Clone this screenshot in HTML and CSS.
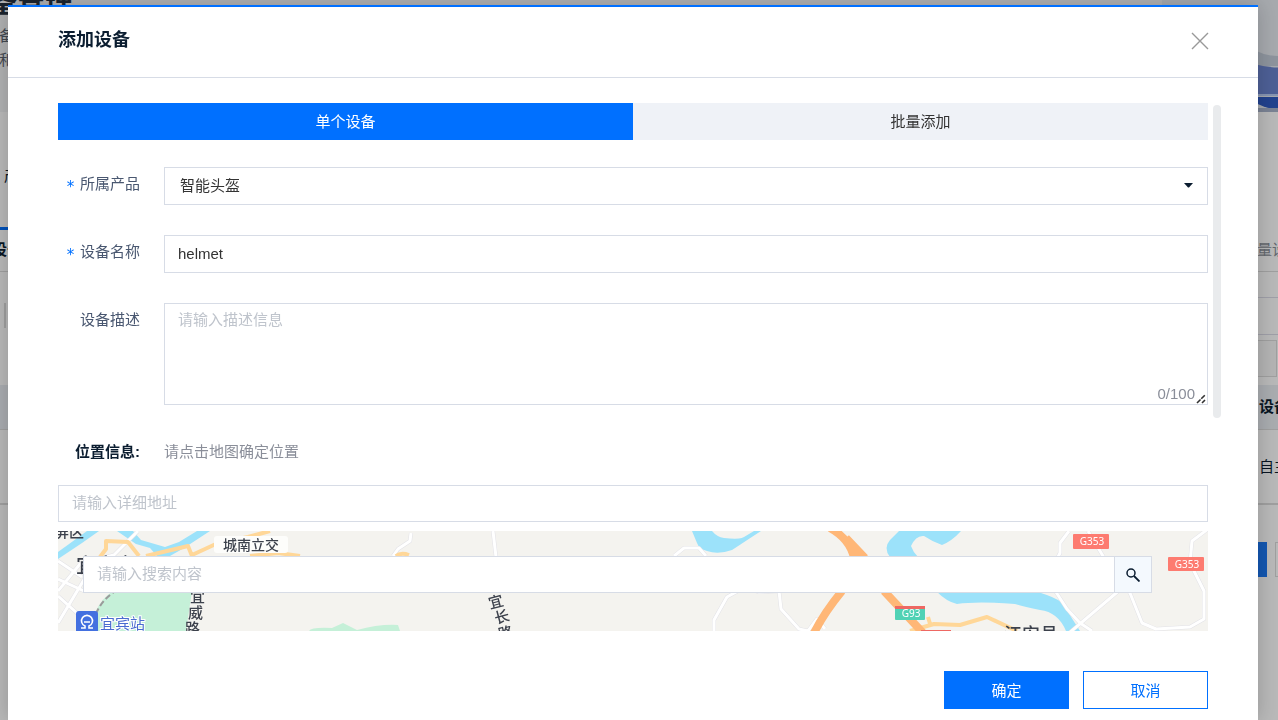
FILE: index.html
```
<!DOCTYPE html>
<html lang="zh-CN">
<head>
    <meta charset="UTF-8">
    <meta name="viewport" content="width=device-width, initial-scale=1.0">
    <title>添加设备</title>
    <link rel="stylesheet" href="styles.css">
</head>
<body>
    <!-- device list page, under the dialog -->
    <div class="page">
        <div class="banner">
            <div class="banner-text">
                <h1>设备管理</h1>
                <p>设备</p>
                <p>　和</p>
            </div>
            <svg class="banner-art" width="140" height="112" viewBox="0 0 140 112">
                <rect width="140" height="112" fill="#e6eaf0"/>
                <path d="M92 50q24 12 48 0v16H92z" fill="#c3ccd9"/>
                <path d="M92 64q24 6 48 2v30H92z" fill="#6b84cf"/>
                <path d="M92 97h48v5q-24 14-48 0z" fill="#2f5bc4"/>
                <path d="M92 95h48" stroke="#b9cdf5" stroke-width="2" fill="none"/>
                <path d="M92 108h48v4H92z" fill="#a9b4cc"/>
            </svg>
        </div>
        <div class="page-tabs"><span>产品</span></div>
        <div class="list-title"><b>设备</b><span>批量设备</span></div>
        <div class="list-tools"><i class="divider"></i><i class="search"></i></div>
        <div class="list-filter"><i></i></div>
        <div class="list-head"><span>设备</span></div>
        <div class="list-row"><span>自主</span></div>
        <div class="pager"><i class="current"></i><i></i></div>
    </div>

    <div class="mask">
        <div class="dialog" role="dialog" aria-labelledby="dialogTitle">
            <div class="dialog-header">
                <h2 id="dialogTitle">添加设备</h2>
                <button class="close" type="button" aria-label="关闭">
                    <svg width="18" height="18" viewBox="0 0 18 18"><path d="M1 1l16 16M17 1L1 17" stroke="#999" stroke-width="1.4"/></svg>
                </button>
            </div>

            <form class="dialog-body">
                <div class="tabs">
                    <button class="tab active" type="button">单个设备</button>
                    <button class="tab" type="button">批量添加</button>
                </div>

                <div class="field">
                    <label for="product"><span class="required">*</span>所属产品</label>
                    <div class="select-box">
                        <select id="product"><option>智能头盔</option></select>
                        <svg class="arrow" width="9" height="5" viewBox="0 0 9 5"><path d="M0 0h9L5 4.500H4z" fill="#0b1d30"/></svg>
                    </div>
                </div>

                <div class="field">
                    <label for="deviceName"><span class="required">*</span>设备名称</label>
                    <input class="control" id="deviceName" type="text" value="helmet">
                </div>

                <div class="field">
                    <label for="deviceDesc">设备描述</label>
                    <div class="textarea-box">
                        <textarea id="deviceDesc" maxlength="100" placeholder="请输入描述信息"></textarea>
                        <span class="count">0/100</span>
                        <svg class="grip" width="10" height="10" viewBox="0 0 10 10"><path d="M1 9l8-8M6 9l3-3" stroke="#333" stroke-width="1.600" stroke-dasharray="5 1"/></svg>
                    </div>
                </div>

                <div class="field location">
                    <label for="address">位置信息:</label>
                    <span class="hint">请点击地图确定位置</span>
                </div>
                <input class="control address" id="address" type="text" placeholder="请输入详细地址">

                <div class="map">
                    <svg class="map-art" viewBox="0 0 1150 100" preserveAspectRatio="xMinYMin slice">
                        <rect width="1150" height="100" fill="#f4f3ef"/>
                        <!-- rivers -->
                        <g fill="#9ce2fa">
                            <path d="M0 21L29 0h12L24 12 0 28z"/>
                            <path d="M59 0h16l8 9 24 7 14-5 18-11h13l-26 17-14 8H99l-7-8-14-4z"/>
                            <path d="M634 0h20q5 6 12 7 16 2 20-1l10-6h7l-29 19q-14 5-25 1-8-2-10-8z"/>
                            <path d="M841 0h62q-9 10-19 14-9-3-18-9-8-1-13 10 2 6 7 11h-28q-7-9 0-17z"/>
                            <path d="M878 60q60 1 98 0 30 8 32 18l14 22h-14q-8-19-26-21-15-3-25-6-38-3-58 0-10-2-21-13z"/>
                        </g>
                        <!-- parks -->
                        <path d="M38 80q5-12 17-20h79l-6 40H35z" fill="#c5f0d8"/>
                        <path d="M251 100q2-4 23-3l11-5 14 7q22-6 41-5l2 6z" fill="#c5f0d8"/>
                        <path d="M38 83q5-13 18-22" stroke="#9a9a9a" stroke-width="2" stroke-dasharray="6 3" fill="none"/>
                        <!-- local roads -->
                        <g fill="none" stroke-linejoin="round">
                            <g stroke="#e2e2e7" stroke-width="4">
                                <path d="M0 60l22-27 34-9 24-24M0 30l24 16M0 92l30-50M0 65l20 18M0 48l26 12"/>
                                <path d="M353 2l-1 8-12 8-5 7M435 0l3 26M616 25l10-8h15l7 8M656 100V89l13-23 18-10 14 5 20-1 2 18 18 20 9 2 9-12 8 10"/>
                                <path d="M1011 0l-9 12v10l-6 12v24l13 20 13 14 12 8M1030 0l18 30 24 32 12 30 14 6 34-2 14-8V60l-14-28 2-22 16-12M1010 103l80-68"/>
                            </g>
                            <g stroke="#fff" stroke-width="3">
                                <path d="M0 60l22-27 34-9 24-24M0 30l24 16M0 92l30-50M0 65l20 18M0 48l26 12"/>
                                <path d="M353 2l-1 8-12 8-5 7M435 0l3 26M616 25l10-8h15l7 8M656 100V89l13-23 18-10 14 5 20-1 2 18 18 20 9 2 9-12 8 10"/>
                                <path d="M1011 0l-9 12v10l-6 12v24l13 20 13 14 12 8M1030 0l18 30 24 32 12 30 14 6 34-2 14-8V60l-14-28 2-22 16-12M1010 103l80-68"/>
                            </g>
                            <!-- main roads -->
                            <g stroke="#ffd798" stroke-width="4">
                                <path d="M42 26l6-8 0-8 22 1 11 14M88 25l42-10 4 10M134 24l26-12 30-6 22-6M192 25l28-3 22 3M338 25q5-4 13-1"/>
                                <path d="M852 100l24-7 26 1 27-8 30 14M870 86l3 10"/>
                            </g>
                            <path d="M772-3q20 11 24 30M784 60q-18 22-28 42M788 7l19 20M826 60l14 15 26 28" stroke="#ffb777" stroke-width="8"/>
                        </g>
                        <!-- place names -->
                        <g class="place">
                            <text x="-4" y="6">屏区</text>
                            <text x="18" y="42" font-size="20">宜宾市区</text>
                            <rect x="156" y="5" width="74" height="17" rx="3" fill="#fdfdfb"/>
                            <text x="165" y="19" font-size="14">城南立交</text>
                            <text x="132" y="71">宜</text>
                            <text x="130" y="87">威</text>
                            <text x="127" y="103">路</text>
                            <text x="432" y="78" transform="rotate(-15 432 78)">宜</text>
                            <text x="438" y="93" transform="rotate(-15 438 93)">长</text>
                            <text x="442" y="109" transform="rotate(-15 442 109)">路</text>
                            <text x="946" y="110" font-size="18">江安县</text>
                        </g>
                        <rect x="18" y="80" width="22" height="22" rx="3" fill="#4370e0"/>
                        <path d="M23 97h4v-2a5.500 5.500 0 1 1 4 0v2h4M26 91h6" fill="none" stroke="#fff" stroke-width="1.600"/>
                        <text class="station" x="42" y="98">宜宾站</text>
                        <!-- road numbers -->
                        <g class="road-no">
                            <rect x="1015" y="3" width="36" height="15" rx="1" fill="#fd7b70"/>
                            <text x="1034" y="14">G353</text>
                            <rect x="1110" y="26" width="36" height="14" rx="1" fill="#fd7b70"/>
                            <text x="1129" y="37">G353</text>
                            <rect x="837" y="75" width="30" height="14" rx="1" fill="#50d2b5"/>
                            <path d="M837 75h30v3h-30z" fill="#ee6863"/>
                            <text x="853" y="86">G93</text>
                            <path d="M863 99h30v2h-30z" fill="#ee6863"/>
                        </g>
                    </svg>
                    <div class="map-search">
                        <input class="control" type="text" aria-label="搜索" placeholder="请输入搜索内容">
                        <button type="button" aria-label="搜索">
                            <svg width="14" height="14" viewBox="0 0 14 14"><circle cx="5" cy="5" r="4" fill="none" stroke="#0b1d30" stroke-width="1.500"/><path d="M8 8l5.500 5.500" stroke="#0b1d30" stroke-width="1.800"/></svg>
                        </button>
                    </div>
                </div>
                <div class="scrollbar"></div>
            </form>

            <div class="dialog-footer">
                <button class="btn primary" type="button">确定</button>
                <button class="btn" type="button">取消</button>
            </div>
        </div>
    </div>
</body>
</html>
```
FILE: styles.css
```
* {
    box-sizing: border-box;
}
body {
    margin: 0;
    overflow: hidden;
    font-family: "Liberation Sans", "Noto Sans CJK SC", sans-serif;
    font-size: 15px;
    color: #0b1d30;
}
button, input, select, textarea {
    font: inherit;
    margin: 0;
    border-radius: 0;
}
h1, h2, p {
    margin: 0;
}

/* page behind */
.page {
    margin: 0 -24px;
}
.banner {
    display: flex;
    justify-content: space-between;
    height: 112px;
    background: #f4f5f6;
}
.banner-text {
    color: #5c6470;
}
.banner h1 {
    height: 24px;
    margin-left: -15px;
    font-size: 28px;
    line-height: 8px;
    color: #26323f;
}
.banner p {
    padding-left: 8px;
    line-height: 24px;
}
.page-tabs {
    height: 118px;
    padding-top: 52px;
}
.page-tabs span {
    display: block;
    width: 80px;
    height: 66px;
    padding-left: 28px;
    line-height: 24px;
    border-bottom: 3px solid #0070ff;
}
.list-title {
    display: flex;
    justify-content: space-between;
    height: 42px;
    padding: 0 0 0 16px;
    line-height: 40px;
    border-bottom: 1px solid #dcdcdc;
}
.list-title span {
    color: #8b9099;
}
.list-tools {
    display: flex;
    justify-content: space-between;
    height: 63px;
    padding: 25px 0 0 28px;
}
.list-tools i {
    width: 2px;
    height: 25px;
    margin-top: 6px;
    background: #dcdcdc;
}
.list-tools .search {
    width: 200px;
    height: 38px;
    margin: 0;
    border: 1px solid #dcdce8;
    background: none;
}
.list-filter {
    display: flex;
    justify-content: flex-end;
    height: 50px;
    padding: 5px 25px 8px 0;
}
.list-filter i {
    width: 80px;
    border: 1px solid #dcdcdc;
    background: #f8f8f8;
}
.list-head, .list-row {
    display: flex;
    justify-content: flex-end;
    padding-right: 13px;
    line-height: 44px;
    border-bottom: 1px solid #dcdcdc;
}
.list-head {
    font-weight: bold;
    background: #eaeef3;
}
.list-row {
    line-height: 73px;
    border-bottom-width: 2px;
}
.pager {
    display: flex;
    justify-content: flex-end;
    gap: 8px;
    padding-top: 37px;
}
.pager i {
    width: 27px;
    height: 35px;
    border: 1px solid #dcdcdc;
}
.pager .current {
    width: 35px;
    border: 0;
    background: #1a78f5;
}

/* dialog */
.mask {
    position: fixed;
    inset: 0;
    padding: 5px 20px 0 8px;
    background: rgba(0, 0, 0, 0.28);
}
.dialog {
    display: flex;
    flex-direction: column;
    min-height: 100%;
    border-top: 2px solid #0070ff;
    background: #fff;
    box-shadow: 0 0 20px rgba(0, 0, 0, 0.2);
}
.dialog-header {
    display: flex;
    align-items: center;
    justify-content: space-between;
    padding: 21px 49px 24px 50px;
    border-bottom: 1px solid #d7dce6;
}
.dialog-header h2 {
    font-size: 18px;
    line-height: 25px;
}
.close {
    display: flex;
    padding: 0;
    border: 0;
    background: none;
}
.dialog-body {
    position: relative;
    margin: 25px 50px 0;
}
.tabs {
    display: flex;
    margin-bottom: 27px;
}
.tab {
    flex: 1;
    height: 37px;
    padding: 0 0 2px;
    border: 0;
    background: #eff2f7;
    color: #333;
}
.tab.active {
    background: #0070ff;
    color: #fff;
}
.field {
    display: flex;
    gap: 24px;
    margin-bottom: 30px;
    line-height: 34px;
}
.field label {
    width: 82px;
    flex: none;
    text-align: right;
    color: #495770;
}
.required {
    margin-right: 5px;
    color: #0070ff;
    font-family: "DejaVu Sans Mono", monospace;
    line-height: 1;
    vertical-align: -3px;
}
.control, .select-box, .textarea-box {
    flex: 1;
    min-width: 0;
}
.control, select, textarea {
    width: 100%;
    height: 38px;
    padding: 0 13px 2px;
    border: 1px solid #d7dce6;
    outline: 0;
    background: #fff;
    color: #333;
}
.select-box, .textarea-box {
    position: relative;
    display: flex;
}
select {
    appearance: none;
    padding: 0 15px;
}
.arrow {
    position: absolute;
    top: 16px;
    right: 15px;
}
textarea {
    height: 102px;
    padding: 5px 13px;
    line-height: 22px;
    resize: none;
}
::placeholder {
    color: #bfc4cc;
    opacity: 1;
}
.count {
    position: absolute;
    right: 13px;
    bottom: 2px;
    line-height: 18px;
    color: #8a8e99;
}
.grip {
    position: absolute;
    right: 2px;
    bottom: 1px;
}
.location {
    margin-bottom: 16px;
}
.location label {
    font-weight: bold;
    color: #0b1d30;
}
.hint {
    color: #8a8e99;
}
.address {
    display: block;
    height: 37px;
}
.map {
    position: relative;
    margin-top: 9px;
    padding: 25px 56px 38px 25px;
    overflow: hidden;
}
.map-art {
    position: absolute;
    top: 0;
    left: 0;
    width: 100%;
    height: 100%;
}
.place {
    font-size: 15px;
    font-weight: 500;
    font-family: "Noto Sans CJK SC", sans-serif;
    fill: #3c414c;
}
.station {
    font-size: 15px;
    fill: #4a6cd0;
    stroke: #fff;
    stroke-width: 2px;
    paint-order: stroke;
}
.road-no text {
    font-size: 10px;
    font-family: "Noto Sans", sans-serif;
    text-anchor: middle;
    fill: #fff;
}
.map-search {
    position: relative;
    display: flex;
}
.map-search .control {
    height: 37px;
}
.map-search button {
    display: flex;
    align-items: center;
    justify-content: center;
    width: 38px;
    margin-left: -1px;
    padding: 0;
    border: 1px solid #d7dce6;
    background: #f4f9fe;
}
.scrollbar {
    position: absolute;
    top: 2px;
    right: -13px;
    width: 8px;
    height: 313px;
    border-radius: 4px;
    background: #e9ebed;
}
.dialog-footer {
    display: flex;
    justify-content: flex-end;
    gap: 14px;
    padding: 40px 50px 0;
}
.btn {
    width: 125px;
    height: 38px;
    padding: 0 0 2px;
    border: 1px solid #0070ff;
    background: #fff;
    color: #0070ff;
}
.btn.primary {
    background: #0070ff;
    color: #fff;
}
```
